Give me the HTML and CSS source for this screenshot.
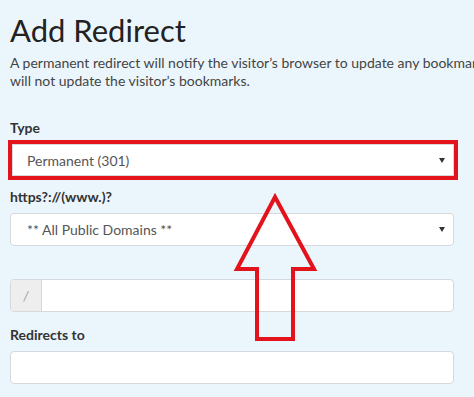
FILE: index.html
```html
<!doctype html>
<html lang="en">
<head>
    <meta charset="UTF-8">
    <meta name="viewport" content="width=device-width, initial-scale=1.0">
    <title>Add Redirect</title>
    <link rel="stylesheet" href="styles.css">
</head>
<body>
    <div class="page">
        <h1>Add Redirect</h1>
        <p class="intro">A permanent redirect will notify the visitor’s browser to update any bookmarks that are linked to the old address.<br>will not update the visitor’s bookmarks.</p>

        <div class="group">
            <label>Type</label>
            <div class="highlight">
                <div class="select">
                    <span>Permanent (301)</span>
                    <span class="caret"></span>
                </div>
            </div>
        </div>

        <div class="group">
            <label>https?://(www.)?</label>
            <div class="select">
                <span>** All Public Domains **</span>
                <span class="caret"></span>
            </div>
        </div>

        <div class="group path-group">
            <div class="input-group">
                <span class="addon">/</span>
                <input type="text" class="field">
            </div>
        </div>

        <div class="group">
            <label>Redirects to</label>
            <input type="text" class="input">
        </div>

        <!-- стрелка поверх формы -->
        <svg class="arrow" width="474" height="397" viewBox="0 0 474 397">
            <polygon points="275,197 314,269 293,269 293,339 257,339 257,269 237,269"
                     fill="none" stroke="#e3131c" stroke-width="4" stroke-linejoin="miter"/>
        </svg>
    </div>
</body>
</html>
```

FILE: styles.css
```css
body {
    margin: 0;
    background-color: #ebf6fc;
    font-family: Lato, "Open Sans", sans-serif;
    color: #333;
    overflow: hidden;
}

.page {
    position: relative;
    padding: 0 20px 0 10px;
    height: 397px;
    box-sizing: border-box;
}

h1 {
    margin: 0;
    padding-top: 11px;
    font-size: 31px;
    line-height: 38px;
    font-weight: normal;
    color: #222;
}

.intro {
    margin: 5px -200px 0 0;
    font-size: 14px;
    line-height: 18px;
    color: #444;
    white-space: nowrap;
}

.group {
    margin-top: 29px;
}

.group + .group {
    margin-top: 8px;
}

.group label {
    display: block;
    font-size: 14px;
    line-height: 18px;
    font-weight: bold;
    color: #333;
    margin-bottom: 7px;
}

.highlight {
    margin: -4px -4px 0 -2px;
    border: 4px solid #e3131c;
}

.select {
    display: flex;
    align-items: center;
    justify-content: space-between;
    height: 33px;
    box-sizing: border-box;
    padding: 0 8px 0 16px;
    background-color: #fff;
    border: 1px solid #d6d9db;
    border-radius: 4px;
    font-size: 14px;
    color: #555;
}

.highlight .select {
    height: 32px;
    padding-left: 14px;
    border-radius: 0;
}

.caret {
    width: 0;
    height: 0;
    border-left: 3px solid transparent;
    border-right: 3px solid transparent;
    border-top: 5px solid #333;
}

.group.path-group {
    margin-top: 33px;
    margin-bottom: 14px;
}

.input-group {
    display: flex;
    height: 33px;
    border: 1px solid #d6d9db;
    border-radius: 4px;
    box-sizing: border-box;
    background-color: #fff;
    overflow: hidden;
}

.addon {
    width: 30px;
    display: flex;
    align-items: center;
    justify-content: center;
    background-color: #eeeeee;
    border-right: 1px solid #d6d9db;
    color: #999;
    font-size: 13px;
    font-style: italic;
}

.field {
    flex: 1;
    border: none;
    outline: none;
    background: transparent;
}

.input {
    display: block;
    width: 100%;
    height: 33px;
    box-sizing: border-box;
    border: 1px solid #d6d9db;
    border-radius: 4px;
    background-color: #fff;
}

.arrow {
    position: absolute;
    top: 0;
    left: 0;
    pointer-events: none;
}
```
